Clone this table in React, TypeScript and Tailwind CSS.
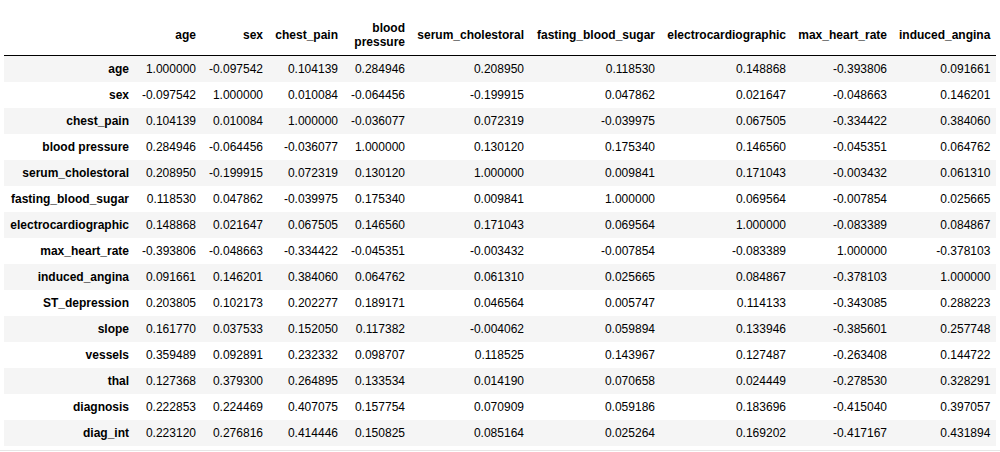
const columns = [
  "age",
  "sex",
  "chest_pain",
  "blood pressure",
  "serum_cholestoral",
  "fasting_blood_sugar",
  "electrocardiographic",
  "max_heart_rate",
  "induced_angina",
];

const widths = [
  "w-[131px]",
  "w-[67px]",
  "w-[67px]",
  "w-[75px]",
  "w-[67px]",
  "w-[119px]",
  "w-[131px]",
  "w-[131px]",
  "w-[101px]",
  "w-[103px]",
];

const rows: [string, string[]][] = [
  ["age", ["1.000000", "-0.097542", "0.104139", "0.284946", "0.208950", "0.118530", "0.148868", "-0.393806", "0.091661"]],
  ["sex", ["-0.097542", "1.000000", "0.010084", "-0.064456", "-0.199915", "0.047862", "0.021647", "-0.048663", "0.146201"]],
  ["chest_pain", ["0.104139", "0.010084", "1.000000", "-0.036077", "0.072319", "-0.039975", "0.067505", "-0.334422", "0.384060"]],
  ["blood pressure", ["0.284946", "-0.064456", "-0.036077", "1.000000", "0.130120", "0.175340", "0.146560", "-0.045351", "0.064762"]],
  ["serum_cholestoral", ["0.208950", "-0.199915", "0.072319", "0.130120", "1.000000", "0.009841", "0.171043", "-0.003432", "0.061310"]],
  ["fasting_blood_sugar", ["0.118530", "0.047862", "-0.039975", "0.175340", "0.009841", "1.000000", "0.069564", "-0.007854", "0.025665"]],
  ["electrocardiographic", ["0.148868", "0.021647", "0.067505", "0.146560", "0.171043", "0.069564", "1.000000", "-0.083389", "0.084867"]],
  ["max_heart_rate", ["-0.393806", "-0.048663", "-0.334422", "-0.045351", "-0.003432", "-0.007854", "-0.083389", "1.000000", "-0.378103"]],
  ["induced_angina", ["0.091661", "0.146201", "0.384060", "0.064762", "0.061310", "0.025665", "0.084867", "-0.378103", "1.000000"]],
  ["ST_depression", ["0.203805", "0.102173", "0.202277", "0.189171", "0.046564", "0.005747", "0.114133", "-0.343085", "0.288223"]],
  ["slope", ["0.161770", "0.037533", "0.152050", "0.117382", "-0.004062", "0.059894", "0.133946", "-0.385601", "0.257748"]],
  ["vessels", ["0.359489", "0.092891", "0.232332", "0.098707", "0.118525", "0.143967", "0.127487", "-0.263408", "0.144722"]],
  ["thal", ["0.127368", "0.379300", "0.264895", "0.133534", "0.014190", "0.070658", "0.024449", "-0.278530", "0.328291"]],
  ["diagnosis", ["0.222853", "0.224469", "0.407075", "0.157754", "0.070909", "0.059186", "0.183696", "-0.415040", "0.397057"]],
  ["diag_int", ["0.223120", "0.276816", "0.414446", "0.150825", "0.085164", "0.025264", "0.169202", "-0.417167", "0.431894"]],
];

const App = () => {
  return (
    <div className="w-[1000px] h-[452px] overflow-hidden bg-white pt-[15px] font-['Liberation_Sans',Arial,sans-serif] text-[12px] text-black">
      <table className="ml-[4px] border-collapse table-fixed">
        <thead>
          <tr className="border-b border-black">
            <th className={`${widths[0]} px-[6px]`}></th>
            {columns.map((c, i) => (
              <th
                key={c}
                className={`${widths[i + 1]} px-[6px] py-[6px] text-right align-middle font-bold leading-[14px]`}
              >
                {c === "blood pressure" ? (
                  <>
                    blood
                    <br />
                    pressure
                  </>
                ) : (
                  c
                )}
              </th>
            ))}
          </tr>
        </thead>
        <tbody>
          {rows.map(([name, vals], idx) => (
            <tr key={name} className={idx % 2 === 0 ? "bg-[#f5f5f5]" : "bg-white"}>
              <th className="h-[26px] px-[6px] py-0 text-right font-bold">{name}</th>
              {vals.map((v, j) => (
                <td key={j} className="h-[26px] px-[6px] py-0 text-right">
                  {v}
                </td>
              ))}
            </tr>
          ))}
        </tbody>
      </table>
      <div className="mt-[4px] border-t border-[#e6e6e6]" />
    </div>
  );
};

export default App;
